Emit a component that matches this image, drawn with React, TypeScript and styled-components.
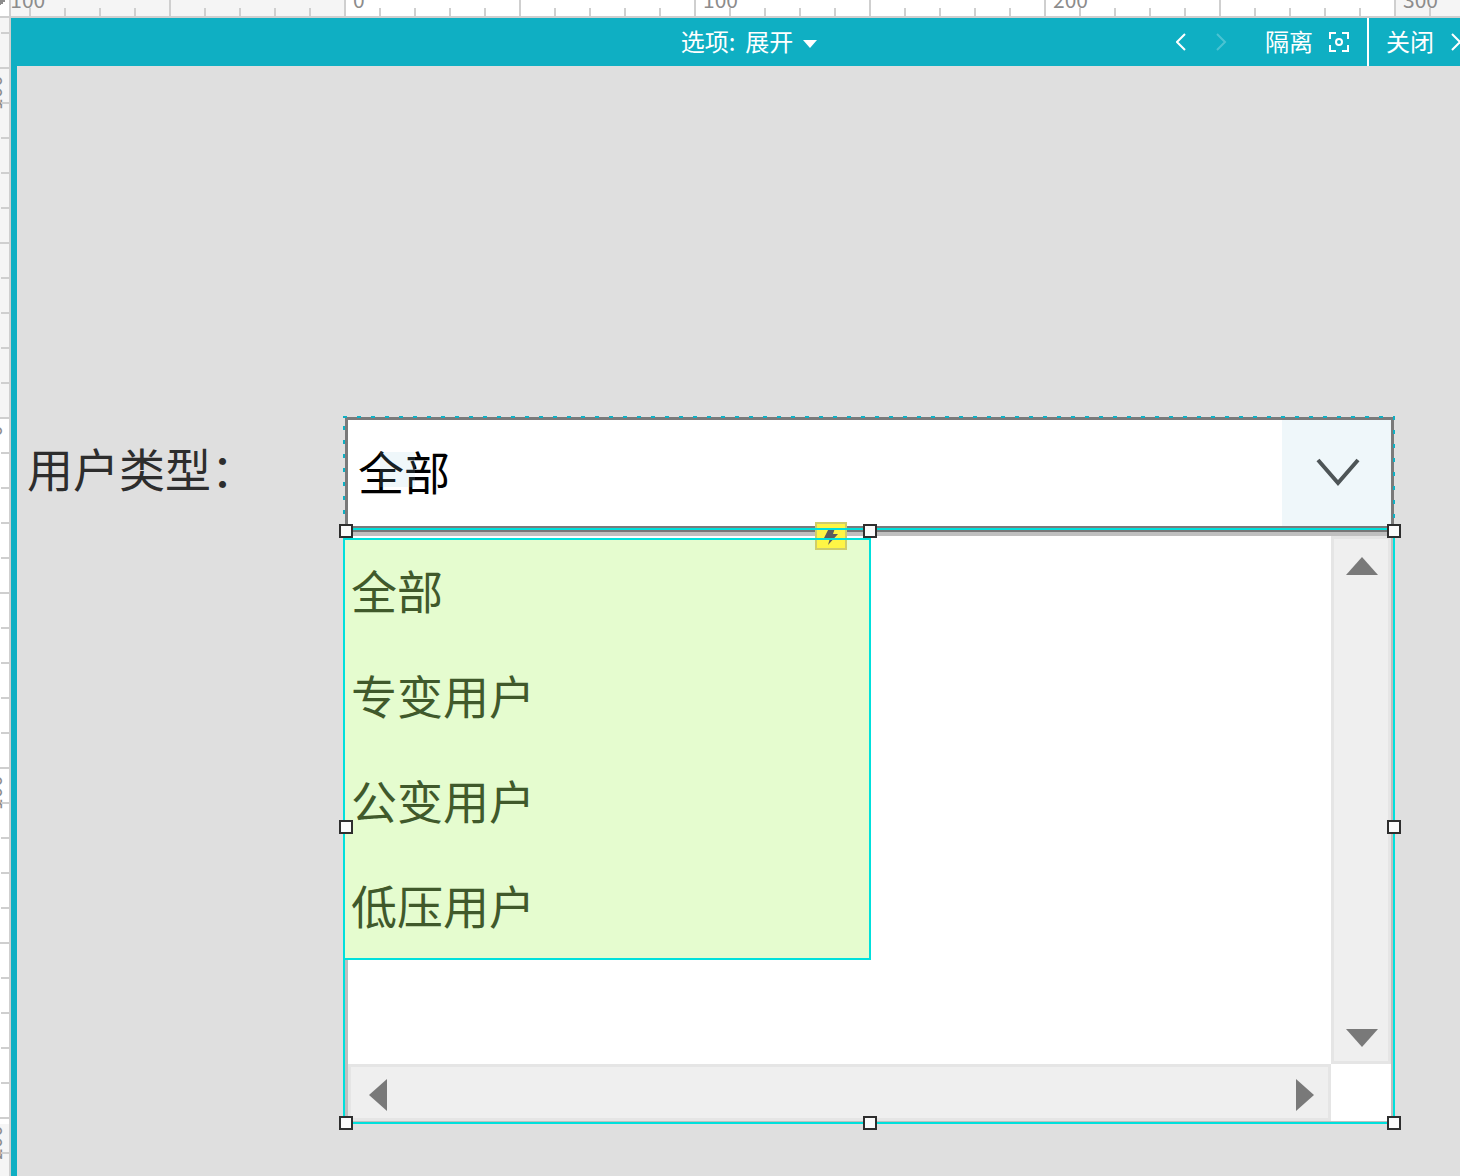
import React from "react";
import styled, { createGlobalStyle, css } from "styled-components";

const sans = '"Noto Sans CJK SC", "Noto Sans", sans-serif';
const teal = "#0fafc3";
const cyan = "#00e0dc";

const GlobalStyle = createGlobalStyle`
  *, *::before, *::after { box-sizing: border-box; }
  body { margin: 0; font-family: ${sans}; }
  button, select { font: inherit; color: inherit; border: 0; padding: 0; background: none; }
`;

const Editor = styled.div`
  display: grid;
  grid-template-columns: 11px minmax(0, 1fr);
  grid-template-rows: 18px minmax(0, 1fr);
  height: 100vh;
  overflow: hidden;
`;

const Corner = styled.div`
  border: solid #cfcfcf;
  border-width: 0 2px 2px 0;
  background: #fff;
  svg { display: block; }
`;

const rulerBase = css`
  display: flex;
  overflow: hidden;
  font-size: 21px;
  line-height: 20px;
  color: #8c8c8c;
`;

const TopRuler = styled.div`
  ${rulerBase}
  padding-right: 37px;
  border-bottom: 2px solid #cfcfcf;
  background: linear-gradient(#fff, #fff) 335px 0 / calc(100% - 400px) 100% no-repeat #f5f5f5;
`;

const LeftRuler = styled.div`
  ${rulerBase}
  flex-direction: column;
  border-right: 2px solid #cfcfcf;
  background: linear-gradient(#fff, #fff) 0 400px / 100% 706px no-repeat #f5f5f5;
`;

const TopTick = styled.span<{ $major: boolean; $first: boolean }>`
  position: relative;
  flex: 0 0 35px;
  margin-left: ${(p) => (p.$first ? "-17px" : "0")};
  background: linear-gradient(#cfcfcf, #cfcfcf) 0 100% / 2px ${(p) => (p.$major ? "16px" : "8px")} no-repeat;
`;

const LeftTick = styled.span<{ $major: boolean; $first: boolean }>`
  position: relative;
  flex: 0 0 35px;
  margin-top: ${(p) => (p.$first ? "-21px" : "0")};
  background: linear-gradient(#cfcfcf, #cfcfcf) 100% 0 / ${(p) => (p.$major ? "9px" : "8px")} 2px no-repeat;
`;

const TopLabel = styled.span`
  position: absolute;
  left: 9px;
  bottom: 7px;
`;

const LeftLabel = styled.span`
  position: absolute;
  right: 6px;
  top: 8px;
  writing-mode: vertical-rl;
  transform: rotate(180deg);
`;

const Workspace = styled.main`
  display: flex;
  flex-direction: column;
  border-left: 6px solid ${teal};
  background: #dfdfdf;
  overflow: hidden;
`;

const StateBar = styled.header`
  display: grid;
  grid-template-columns: 1fr auto 1fr;
  flex: 0 0 48px;
  margin: 0 -27px 0 -6px;
  background: ${teal};
  color: #fff;
  font-size: 24px;
  line-height: 48px;
`;

const BarText = styled.span`
  padding-bottom: 2px;
  line-height: 46px;
`;

const StateButton = styled.button`
  grid-column: 2;
  display: flex;
  align-items: center;
  gap: 10px;
`;

const Actions = styled.div`
  display: flex;
  justify-content: flex-end;
`;

const BarButton = styled.button<{ $left: number; $gap?: number; $right?: number; $line?: boolean }>`
  display: flex;
  align-items: center;
  gap: ${(p) => p.$gap ?? 0}px;
  padding-left: ${(p) => p.$left}px;
  padding-right: ${(p) => p.$right ?? 0}px;
  border-left: ${(p) => (p.$line ? "2px solid #fff" : "0")};
  &:disabled { opacity: 0.25; }
`;

const Canvas = styled.form`
  display: grid;
  grid-template-columns: 316px minmax(0, 1fr);
  padding: 350px 65px 52px 10px;
  color: #2d2d2d;
  font-size: 46px;
`;

const FieldLabel = styled.label`
  line-height: 102px;
`;

const Combo = styled.div`
  min-width: 0;
`;

const dash = (dir: string) => `repeating-linear-gradient(to ${dir}, #0fafc3 0 4px, transparent 4px 14px)`;

const Field = styled.div`
  position: relative;
  display: flex;
  height: 112px;
  padding: 1px 1px 0 2px;
  &::after {
    content: "";
    position: absolute;
    inset: 0;
    background:
      ${dash("right")} 0 0 / 100% 2px no-repeat,
      ${dash("bottom")} 0 10px / 2px 100% no-repeat,
      ${dash("bottom")} 100% 0 / 2px 100% no-repeat;
    pointer-events: none;
  }
`;

const Select = styled.select`
  appearance: none;
  flex: 1;
  min-width: 0;
  padding: 0 0 6px 10px;
  border: 3px solid #7a7a7a;
  border-bottom-width: 2px;
  border-radius: 0;
  background: #fff;
  color: #000;
`;

const Arrow = styled.span`
  position: absolute;
  top: 4px;
  right: 4px;
  bottom: 2px;
  width: 109px;
  display: grid;
  place-items: center;
  background: #eff7fa;
  pointer-events: none;
`;

const Hotspot = styled.span`
  position: absolute;
  left: 37px;
  top: 36px;
  width: 35px;
  height: 35px;
  background: rgba(155, 205, 225, 0.16);
  pointer-events: none;
`;

const Dropdown = styled.div`
  position: relative;
  display: grid;
  grid-template-columns: minmax(0, 1fr) 60px;
  grid-template-rows: 528px 57px;
  padding: 8px 4px 3px 5px;
  background:
    linear-gradient(#777, #777) 0 0 / 100% 4px no-repeat,
    #bfbfbf;
  &::after {
    content: "";
    position: absolute;
    inset: 0;
    z-index: 2;
    border: 2px solid ${cyan};
    pointer-events: none;
  }
`;

const Pane = styled.div`
  min-width: 0;
  padding-top: 2px;
  background: #fff;
`;

const Options = styled.ul`
  position: relative;
  width: 528px;
  max-width: 100%;
  margin: 0 0 0 -5px;
  padding: 1px 0;
  list-style: none;
  background: #e5fccf;
  color: #40592b;
  &::after {
    content: "";
    position: absolute;
    inset: 0;
    z-index: 2;
    border: 2px solid ${cyan};
    pointer-events: none;
  }
`;

const Option = styled.li`
  padding: 0 0 4px 8px;
  line-height: 101px;
`;

const ScrollBar = styled.div<{ $vertical?: boolean }>`
  display: flex;
  flex-direction: ${(p) => (p.$vertical ? "column" : "row")};
  justify-content: space-between;
  align-items: center;
  padding: ${(p) => (p.$vertical ? "18px 0 14px 2px" : "4px 14px 0 18px")};
  border: 3px solid #e5e5e5;
  background: #efefef;
`;

const ScrollButton = styled.button`
  display: block;
  svg { display: block; }
`;

const ScrollCorner = styled.div`
  background: #fff;
`;

const Badge = styled.span`
  position: absolute;
  z-index: 1;
  top: -6px;
  left: calc(45% - 1px);
  display: grid;
  place-items: center;
  width: 32px;
  height: 28px;
  border: 2px solid #cfcd6a;
  background: #fff545;
`;

const Frame = styled.div`
  position: absolute;
  inset: 3px 1px 1px 3px;
  z-index: 3;
  pointer-events: none;
`;

const Handle = styled.span<{ $x: number; $y: number }>`
  position: absolute;
  left: ${(p) => p.$x}%;
  top: ${(p) => p.$y}%;
  width: 14px;
  height: 14px;
  margin: -7px 0 0 -7px;
  border: 2px solid #2e2e2e;
  background: #fbfbfb;
`;

const handles = [
  [0, 0], [50, 0], [100, 0],
  [0, 50], [100, 50],
  [0, 100], [50, 100], [100, 100],
];

const ticks = Array.from({ length: 60 }, (_, i) => i);
const options = ["全部", "专变用户", "公变用户", "低压用户"];

const arrows = {
  up: ["M16 0 32 18H0Z", 32, 18],
  down: ["M0 0H32L16 18Z", 32, 18],
  left: ["M18 0V32L0 16Z", 18, 32],
  right: ["M0 0 18 16 0 32Z", 18, 32],
} as const;

function Scroll({ to, label }: { to: keyof typeof arrows; label: string }) {
  const [d, w, h] = arrows[to];
  return (
    <ScrollButton type="button" aria-label={label}>
      <svg width={w} height={h}><path d={d} fill="#797979" /></svg>
    </ScrollButton>
  );
}

export default function App() {
  return (
    <>
      <GlobalStyle />
      <Editor>
        <Corner>
          <svg width="9" height="16"><path d="M0 0H5V2H3V4H1V5H0Z" fill="#8c8c8c" /></svg>
        </Corner>
        <TopRuler>
          {ticks.map((i) => (
            <TopTick key={i} $first={i === 0} $major={i % 5 === 0}>
              {i % 10 === 0 && <TopLabel>{i * 10 - 100}</TopLabel>}
            </TopTick>
          ))}
        </TopRuler>
        <LeftRuler>
          {ticks.map((i) => (
            <LeftTick key={i} $first={i === 0} $major={i % 5 === 2}>
              {i % 10 === 2 && <LeftLabel>{Math.abs(i * 10 - 120)}</LeftLabel>}
            </LeftTick>
          ))}
        </LeftRuler>
        <Workspace>
          <StateBar>
            <StateButton type="button">
              <BarText>选项:</BarText>
              <BarText>展开</BarText>
              <svg width="14" height="12"><path d="M0 4H14L7 12Z" fill="#fff" /></svg>
            </StateButton>
            <Actions>
              <BarButton type="button" aria-label="上一个" $left={0}>
                <svg width="12" height="18" fill="none" stroke="#fff" strokeWidth="2"><path d="M9 1 1 9l8 8" /></svg>
              </BarButton>
              <BarButton type="button" aria-label="下一个" disabled $left={28}>
                <svg width="12" height="18" fill="none" stroke="#fff" strokeWidth="2"><path d="m1 1 8 8-8 8" /></svg>
              </BarButton>
              <BarButton type="button" $left={37} $gap={15} $right={17}>
                <BarText>隔离</BarText>
                <svg width="22" height="22" fill="none" stroke="#fff" strokeWidth="2">
                  <path d="M8 2H2v6M14 2h6v6M8 20H2v-6M14 20h6v-6" />
                  <circle cx="11" cy="11" r="3" />
                </svg>
              </BarButton>
              <BarButton type="button" $line $left={17} $gap={17} $right={18}>
                <BarText>关闭</BarText>
                <svg width="18" height="18" fill="none" stroke="#fff" strokeWidth="2"><path d="m1 1 16 16M17 1 1 17" /></svg>
              </BarButton>
            </Actions>
          </StateBar>
          <Canvas>
            <FieldLabel htmlFor="user-type">用户类型：</FieldLabel>
            <Combo>
              <Field>
                <Select id="user-type" defaultValue="全部">
                  {options.map((o) => <option key={o}>{o}</option>)}
                </Select>
                <Arrow>
                  <svg width="46" height="30" fill="none" stroke="#4e5557" strokeWidth="4"><path d="M4 2 24 25 44 2" /></svg>
                </Arrow>
                <Hotspot />
              </Field>
              <Dropdown>
                <Pane>
                  <Options role="listbox" aria-label="用户类型">
                    {options.map((o) => <Option key={o} role="option">{o}</Option>)}
                  </Options>
                </Pane>
                <ScrollBar $vertical>
                  <Scroll to="up" label="向上滚动" />
                  <Scroll to="down" label="向下滚动" />
                </ScrollBar>
                <ScrollBar>
                  <Scroll to="left" label="向左滚动" />
                  <Scroll to="right" label="向右滚动" />
                </ScrollBar>
                <ScrollCorner />
                <Badge>
                  <svg width="14" height="18"><path d="M5 1H11L9 7H14L4 18L6 11H0Z" fill="#5c5c5c" /></svg>
                </Badge>
                <Frame>
                  {handles.map(([x, y]) => <Handle key={`${x}-${y}`} $x={x} $y={y} />)}
                </Frame>
              </Dropdown>
            </Combo>
          </Canvas>
        </Workspace>
      </Editor>
    </>
  );
}
